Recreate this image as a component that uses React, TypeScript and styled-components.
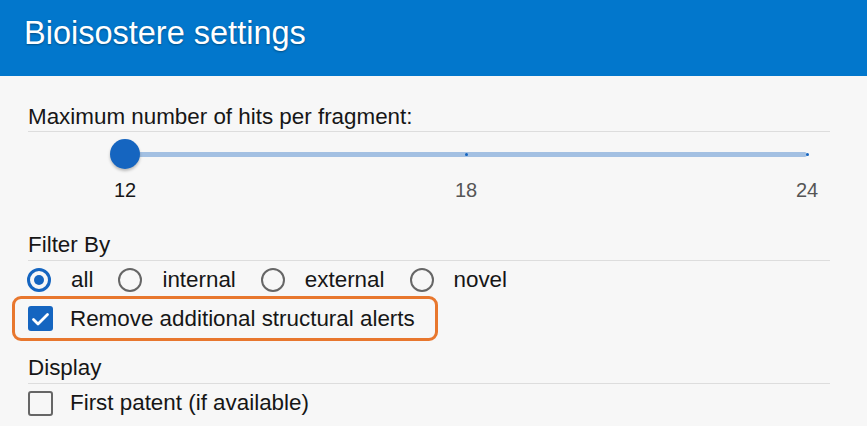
import styled, { createGlobalStyle } from 'styled-components';

const blue = '#1565c0';
const grey = '#666666';

const GlobalStyle = createGlobalStyle`
  html, body {
    margin: 0;
    padding: 0;
    background: #f7f7f7;
    font-family: 'Liberation Sans', Arial, sans-serif;
    color: #161616;
  }
`;

const Header = styled.header`
  box-sizing: border-box;
  height: 76px;
  background: #0277cc;
  padding: 17px 0 0 24px;
`;

const Title = styled.h1`
  margin: 0;
  font-size: 32.5px;
  line-height: 32px;
  font-weight: 400;
  color: #ffffff;
  text-shadow: 0 1px 2px rgba(0, 0, 0, 0.35);
`;

const Body = styled.div`
  padding: 28px 37px 0 28px;
`;

const SectionLabel = styled.div<{ pad?: number }>`
  font-size: 22.4px;
  line-height: 26px;
  padding-bottom: ${(p) => p.pad ?? 1}px;
  border-bottom: 1px solid #dddddd;
`;

const Section = styled.section<{ gap: number }>`
  margin-top: ${(p) => p.gap}px;
`;

const SliderWrap = styled.div`
  padding: 0 23px 0 97px;
`;

const Track = styled.div`
  position: relative;
  height: 5px;
  margin-top: 20px;
  background: #a3c0e2;
  border-radius: 3px;
`;

const Thumb = styled.div`
  position: absolute;
  left: -15px;
  top: -13px;
  width: 30px;
  height: 30px;
  border-radius: 50%;
  background: ${blue};
  box-shadow: 0 2px 3px rgba(0, 0, 0, 0.25);
`;

const Tick = styled.div<{ at: number }>`
  position: absolute;
  top: 1px;
  left: calc(${(p) => p.at}% - 1px);
  width: 3px;
  height: 3px;
  border-radius: 50%;
  background: ${blue};
`;

const Marks = styled.div`
  display: flex;
  justify-content: space-between;
  margin: 21px -12px 0;
`;

const Mark = styled.span<{ active?: boolean }>`
  width: 24px;
  text-align: center;
  font-size: 20px;
  line-height: 24px;
  color: ${(p) => (p.active ? '#161616' : '#555555')};
`;

const RadioRow = styled.div`
  display: flex;
  align-items: center;
  margin: 5px 0 0 -1px;
  height: 28px;
`;

const RadioItem = styled.label`
  display: flex;
  align-items: center;
  font-size: 22.4px;
  line-height: 26px;
  margin-right: 25px;
`;

const RadioCircle = styled.span<{ checked?: boolean }>`
  box-sizing: border-box;
  width: 24px;
  height: 24px;
  border-radius: 50%;
  border: ${(p) => (p.checked ? `3px solid ${blue}` : `2.5px solid ${grey}`)};
  margin-right: 20px;
  display: flex;
  align-items: center;
  justify-content: center;
  &::after {
    content: '';
    display: ${(p) => (p.checked ? 'block' : 'none')};
    width: 10px;
    height: 10px;
    border-radius: 50%;
    background: ${blue};
  }
`;

const Highlight = styled.div`
  margin: 2px 0 0 -16px;
  width: 426px;
  height: 45px;
  box-sizing: border-box;
  border: 3px solid #e8772e;
  border-radius: 9px;
  display: flex;
  align-items: center;
  padding-left: 13px;
`;

const CheckRow = styled.label`
  display: flex;
  align-items: center;
  font-size: 22.4px;
  line-height: 26px;
`;

const Box = styled.span<{ checked?: boolean }>`
  box-sizing: border-box;
  width: 25px;
  height: 25px;
  border-radius: 3px;
  margin-right: 17px;
  background: ${(p) => (p.checked ? blue : 'transparent')};
  border: ${(p) => (p.checked ? 'none' : `2.5px solid ${grey}`)};
  display: flex;
  align-items: center;
  justify-content: center;
`;

const PlainRow = styled.div`
  margin-top: 6px;
`;

export default function App() {
  return (
    <>
      <GlobalStyle />
      <Header>
        <Title>Bioisostere settings</Title>
      </Header>
      <Body>
        <SectionLabel>Maximum number of hits per fragment:</SectionLabel>
        <SliderWrap>
          <Track>
            <Tick at={50} />
            <Tick at={100} />
            <Thumb />
          </Track>
          <Marks>
            <Mark active>12</Mark>
            <Mark>18</Mark>
            <Mark>24</Mark>
          </Marks>
        </SliderWrap>

        <Section gap={30}>
          <SectionLabel pad={2}>Filter By</SectionLabel>
          <RadioRow>
            <RadioItem><RadioCircle checked />all</RadioItem>
            <RadioItem><RadioCircle />internal</RadioItem>
            <RadioItem><RadioCircle />external</RadioItem>
            <RadioItem><RadioCircle />novel</RadioItem>
          </RadioRow>
          <Highlight>
            <CheckRow>
              <Box checked>
                <svg width="25" height="25" viewBox="0 0 25 25" fill="none" stroke="#fff" strokeWidth="2.8" strokeLinecap="round" strokeLinejoin="round">
                  <path d="M5.5 13.5L10 18L19.5 8.5" />
                </svg>
              </Box>
              Remove additional structural alerts
            </CheckRow>
          </Highlight>
        </Section>

        <Section gap={14}>
          <SectionLabel pad={2}>Display</SectionLabel>
          <PlainRow>
            <CheckRow>
              <Box />
              First patent (if available)
            </CheckRow>
          </PlainRow>
        </Section>
      </Body>
    </>
  );
}
